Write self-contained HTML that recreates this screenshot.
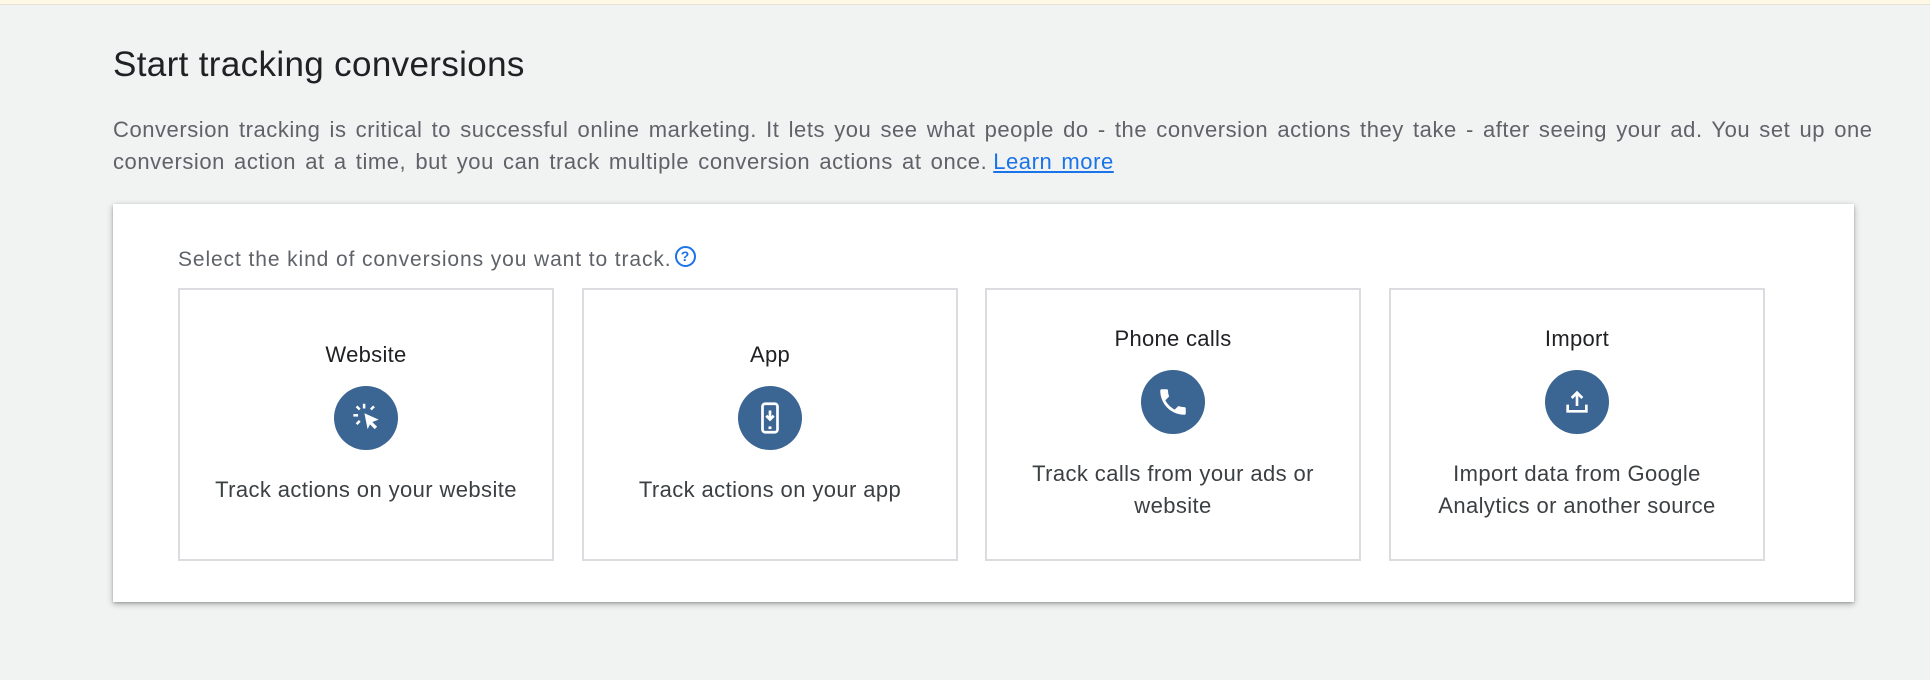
<!DOCTYPE html>
<html><head><meta charset="utf-8"><style>
*{box-sizing:border-box;margin:0;padding:0}
body{width:1930px;height:680px;background:#f1f2f2;font-family:"Liberation Sans",Arial,sans-serif;position:relative;overflow:hidden}
.top{position:absolute;left:0;top:0;width:1930px;height:5px;background:#fdf7e6;border-bottom:1px solid #e6e2d6}
h1{position:absolute;left:113px;top:45px;font-size:35px;font-weight:400;color:#202124;letter-spacing:0.35px}
.p{position:absolute;left:113px;top:114px;width:1815px;font-size:22px;line-height:32px;color:#5f6368;letter-spacing:0.55px;word-spacing:2.5px}
.p a{color:#1a73e8;text-decoration:underline;margin-left:6px}
.card{position:absolute;left:113px;top:204px;width:1741px;height:398px;background:#fff;box-shadow:0 2px 6px rgba(0,0,0,.3),0 1px 2px rgba(0,0,0,.15)}
.lbl{position:absolute;left:65px;top:42px;font-size:21px;color:#5f6368;letter-spacing:0.9px}
.help{display:inline-block;width:21px;height:21px;border:2px solid #1a73e8;border-radius:50%;color:#1a73e8;font-size:14px;line-height:17px;text-align:center;font-weight:bold;vertical-align:5px;margin-left:3px;letter-spacing:0}
.tile{position:absolute;top:84px;width:376px;height:273px;border:2px solid #dadce0;display:flex;flex-direction:column;align-items:center;justify-content:center;text-align:center}
.t{font-size:22px;font-weight:500;color:#202124;line-height:24px;letter-spacing:0.3px}
.c{width:64px;height:64px;border-radius:50%;background:#3b6592;margin-top:19px;display:flex;align-items:center;justify-content:center}
.d{font-size:22px;color:#3c4043;line-height:32px;margin-top:24px;letter-spacing:0.4px}
</style></head><body>
<div class="top"></div>
<h1>Start tracking conversions</h1>
<div class="p">Conversion tracking is critical to successful online marketing. It lets you see what people do - the conversion actions they take - after seeing your ad. You set up one conversion action at a time, but you can track multiple conversion actions at once.<a>Learn more</a></div>
<div class="card">
<div class="lbl">Select the kind of conversions you want to track.<span class="help">?</span></div>
<div class="tile" style="left:65px"><div class="t">Website</div><div class="c"><svg width="38" height="38" viewBox="0 0 24 24" fill="#fff"><path d="M11 9l9 4-4 1.5 3 3-1.5 1.5-3-3L13 19z"/><rect x="10" y="3" width="1.6" height="3"/><rect x="4" y="9.5" width="3" height="1.6"/><path d="M5.5 5.2l1.1-1.1 2 2-1.1 1.1z"/><path d="M14.5 6.1l2-2 1.1 1.1-2 2z"/><path d="M5.5 15.3l2-2 1.1 1.1-2 2z"/></svg></div><div class="d">Track actions on your website</div></div>
<div class="tile" style="left:469px"><div class="t">App</div><div class="c"><svg width="36" height="36" viewBox="0 0 24 24" fill="none" stroke="#fff" stroke-width="1.8"><rect x="7" y="2.5" width="10" height="19" rx="1.8"/><path d="M12 7v6M9.5 10.5L12 13l2.5-2.5"/><path d="M11 18.5h2"/></svg></div><div class="d">Track actions on your app</div></div>
<div class="tile" style="left:872px"><div class="t">Phone calls</div><div class="c"><svg width="34" height="34" viewBox="0 0 24 24" fill="#fff"><path d="M6.6 10.8c1.4 2.8 3.8 5.1 6.6 6.6l2.2-2.2c.3-.3.7-.4 1-.2 1.1.4 2.3.6 3.6.6.6 0 1 .4 1 1V20c0 .6-.4 1-1 1C10.6 21 3 13.4 3 4c0-.6.4-1 1-1h3.5c.6 0 1 .4 1 1 0 1.3.2 2.5.6 3.6.1.3 0 .7-.2 1z"/></svg></div><div class="d">Track calls from your ads or<br>website</div></div>
<div class="tile" style="left:1276px"><div class="t">Import</div><div class="c"><svg width="32" height="32" viewBox="0 0 24 24" fill="none" stroke="#fff" stroke-width="2"><path d="M12 15V5M8 9l4-4 4 4"/><path d="M5 14v5h14v-5"/></svg></div><div class="d">Import data from Google<br>Analytics or another source</div></div>
</div>
</body></html>
